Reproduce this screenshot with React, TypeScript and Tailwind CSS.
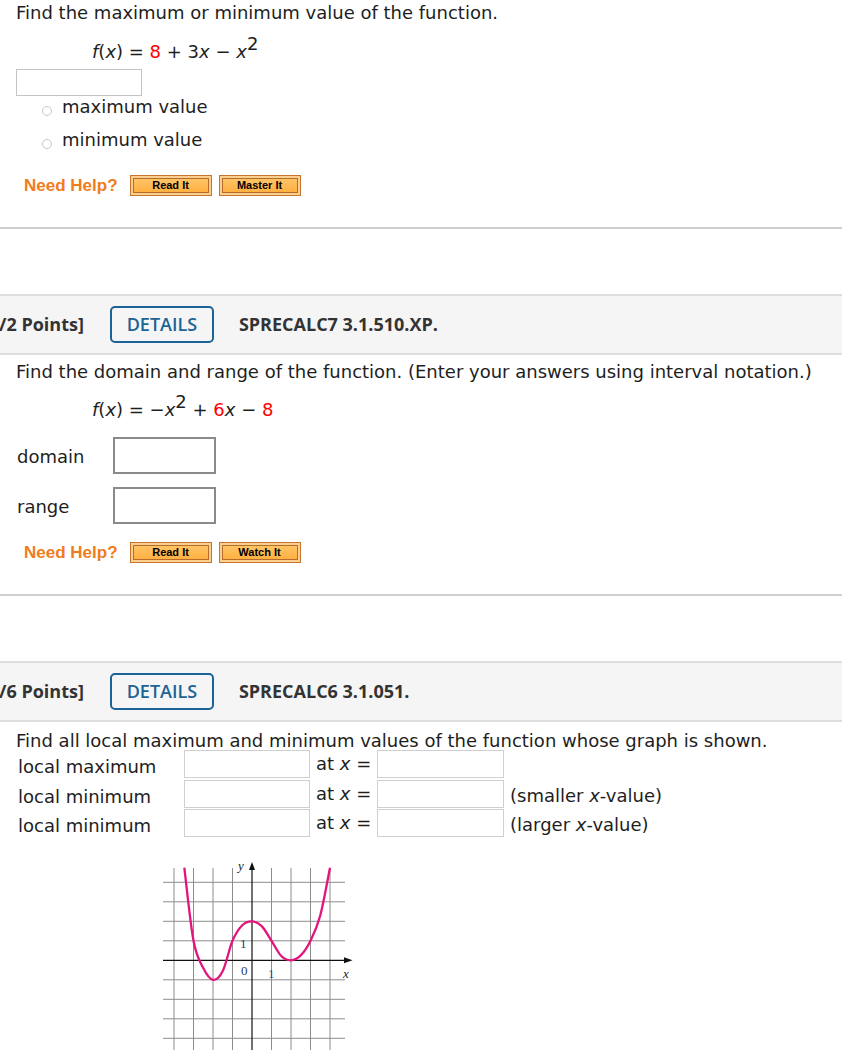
import React from "react";

const U = 19.5;
const OX = 89;
const OY = 101.3;

const curvePts: [number, number][] = [
  [-3.47, 4.75],
  [-3, 1],
  [-2.5, -0.4],
  [-2, -1],
  [-1.5, -0.55],
  [-1, 1],
  [-0.5, 1.8],
  [0, 2],
  [0.5, 1.75],
  [1, 1],
  [1.5, 0.22],
  [2, 0],
  [2.5, 0.25],
  [3, 1],
  [3.5, 2.3],
  [4, 4.75],
];

function toSvg([gx, gy]: [number, number]): [number, number] {
  return [OX + gx * U, OY - gy * U];
}

// catmull-rom through the points, as cubic beziers
function curvePath() {
  const p = curvePts.map(toSvg);
  let d = `M${p[0][0]},${p[0][1]}`;
  for (let i = 0; i < p.length - 1; i++) {
    const p0 = p[i - 1] || p[i];
    const p1 = p[i];
    const p2 = p[i + 1];
    const p3 = p[i + 2] || p2;
    const c1x = p1[0] + (p2[0] - p0[0]) / 6;
    const c1y = p1[1] + (p2[1] - p0[1]) / 6;
    const c2x = p2[0] - (p3[0] - p1[0]) / 6;
    const c2y = p2[1] - (p3[1] - p1[1]) / 6;
    d += ` C${c1x},${c1y} ${c2x},${c2y} ${p2[0]},${p2[1]}`;
  }
  return d;
}

function Graph() {
  const ks = [-4, -3, -2, -1, 1, 2, 3, 4];
  return (
    <svg width="194" height="194" viewBox="0 0 194 194" className="block">
      {ks.map((k) => (
        <line key={"v" + k} x1={OX + k * U} y1={9} x2={OX + k * U} y2={191} stroke="#8c8c8c" strokeWidth="1" />
      ))}
      {ks.map((k) => (
        <line key={"h" + k} x1={0} y1={OY + k * U} x2={182} y2={OY + k * U} stroke="#8c8c8c" strokeWidth="1" />
      ))}
      <line x1={OX} y1={8} x2={OX} y2={191} stroke="#111" strokeWidth="1.2" />
      <line x1={0} y1={OY} x2={185} y2={OY} stroke="#111" strokeWidth="1.2" />
      <polygon points={`${OX - 3},${11} ${OX},${3} ${OX + 3},${11}`} fill="#111" />
      <polygon points={`${181},${OY - 3} ${189.5},${OY} ${181},${OY + 3}`} fill="#111" />
      <path d={curvePath()} fill="none" stroke="#e2157d" strokeWidth="2.3" />
      <g fontFamily="'Liberation Serif', 'DejaVu Serif', serif" fontSize="13">
        <text x="75" y="11" fontStyle="italic" fill="#222">y</text>
        <text x="180" y="119" fontStyle="italic" fill="#222">x</text>
        <text x="77" y="89" fill="#2b3a5e">1</text>
        <text x="78" y="116" fill="#2b3a5e">0</text>
        <text x="105" y="119" fill="#1f4f8f">1</text>
      </g>
    </svg>
  );
}

function HelpBtn({ label }: { label: string }) {
  return (
    <span className="inline-flex w-[82px] h-[21px] border border-[#c5752f] bg-[#fbd08f] p-[2px]">
      <span className="flex-1 flex items-center justify-center border border-[#b66d2b] bg-gradient-to-b from-[#ffc466] to-[#ffb040] text-[11px] font-bold leading-none text-black font-['Liberation_Sans',Arial,sans-serif]">
        {label}
      </span>
    </span>
  );
}

function NeedHelp({ second }: { second: string }) {
  return (
    <div className="flex items-center h-[21px] ml-2">
      <span className="text-[17px] font-bold text-[#ef7d1c] font-['Liberation_Sans',Arial,sans-serif] mr-[12px]">
        Need Help?
      </span>
      <HelpBtn label="Read It" />
      <span className="w-[7px]" />
      <HelpBtn label={second} />
    </div>
  );
}

function Header({ points, code }: { points: string; code: string }) {
  return (
    <div className="flex items-center h-[61px] border-y-2 border-[#dedede] bg-[#f5f5f5] font-['Open_Sans',sans-serif] text-[18px] text-[#333]">
      <span className="-ml-[1px] font-bold">{points}</span>
      <span className="ml-[26px] flex items-center justify-center w-[104px] h-[37px] border-2 border-[#1b6396] rounded-[5px] text-[#1b6396] font-semibold">
        DETAILS
      </span>
      <span className="ml-[25px] font-bold">{code}</span>
    </div>
  );
}

function Radio({ label }: { label: string }) {
  return (
    <div className="flex items-center h-5 ml-[26px]">
      <span className="w-[10px] h-[10px] rounded-full border border-[#c8c8c8] mt-[10px]" />
      <span className="ml-[10px]">{label}</span>
    </div>
  );
}

function Divider() {
  return <div className="h-[2px] bg-[#cfcfcf]" />;
}

function Row({ label, note }: { label: string; note?: React.ReactNode }) {
  return (
    <div className="flex h-[28px]">
      <span className="w-[166px] ml-[2px] pt-[3px]">{label}</span>
      <span className="w-[126px] h-[28px] border border-[#cfcfcf]" />
      <span className="w-[67px] pl-[6px]">
        at <i>x</i> =
      </span>
      <span className="w-[127px] h-[28px] border border-[#cfcfcf]" />
      {note && <span className="pl-[6px] pt-[2px]">{note}</span>}
    </div>
  );
}

export default function App() {
  return (
    <div className="w-[842px] min-h-[1060px] bg-white overflow-hidden font-['DejaVu_Sans',Verdana,sans-serif] text-[18px] text-[#1e1e1e]">
      <div className="pl-4 pt-[3px]">
        <p className="leading-5">Find the maximum or minimum value of the function.</p>
        <p className="mt-[19px] pl-[76px] leading-5">
          <i>f</i>(<i>x</i>) = <span className="text-[#ff0000]">8</span> + 3<i>x</i> − <i>x</i>
          <sup className="text-[18px] -top-[0.45em]">2</sup>
        </p>
        <div className="mt-[7px] w-[126px] h-[27px] border border-[#c4c4c4]" />
        <div className="flex flex-col gap-[13px]">
          <Radio label="maximum value" />
          <Radio label="minimum value" />
        </div>
        <div className="mt-[26px]">
          <NeedHelp second="Master It" />
        </div>
      </div>
      <div className="mt-[31px]">
        <Divider />
      </div>

      <div className="mt-[65px]">
        <Header points="/2 Points]" code="SPRECALC7 3.1.510.XP." />
      </div>
      <div className="pl-4">
        <p className="mt-[7px] leading-5">
          Find the domain and range of the function. (Enter your answers using interval notation.)
        </p>
        <p className="mt-[18px] pl-[76px] leading-5">
          <i>f</i>(<i>x</i>) = −<i>x</i>
          <sup className="text-[18px] -top-[0.45em]">2</sup> + <span className="text-[#ff0000]">6</span>
          <i>x</i> − <span className="text-[#ff0000]">8</span>
        </p>
        <div className="mt-[17px] flex items-center">
          <span className="w-[97px] pl-[1px] pt-[2px]">domain</span>
          <span className="w-[103px] h-[37px] border-2 border-[#8a8a8a]" />
        </div>
        <div className="mt-[13px] flex items-center">
          <span className="w-[97px] pl-[1px] pt-[2px]">range</span>
          <span className="w-[103px] h-[37px] border-2 border-[#8a8a8a]" />
        </div>
        <div className="mt-[18px]">
          <NeedHelp second="Watch It" />
        </div>
      </div>
      <div className="mt-[31px]">
        <Divider />
      </div>

      <div className="mt-[65px]">
        <Header points="/6 Points]" code="SPRECALC6 3.1.051." />
      </div>
      <div className="pl-4">
        <p className="mt-[10px] leading-[18px]">
          Find all local maximum and minimum values of the function whose graph is shown.
        </p>
        <div className="mt-0 flex flex-col gap-[1.5px]">
          <Row label="local maximum" />
          <Row
            label="local minimum"
            note={
              <>
                (smaller <i>x</i>-value)
              </>
            }
          />
          <Row
            label="local minimum"
            note={
              <>
                (larger <i>x</i>-value)
              </>
            }
          />
        </div>
        <div className="mt-[22px] ml-[147px]">
          <Graph />
        </div>
      </div>
    </div>
  );
}
